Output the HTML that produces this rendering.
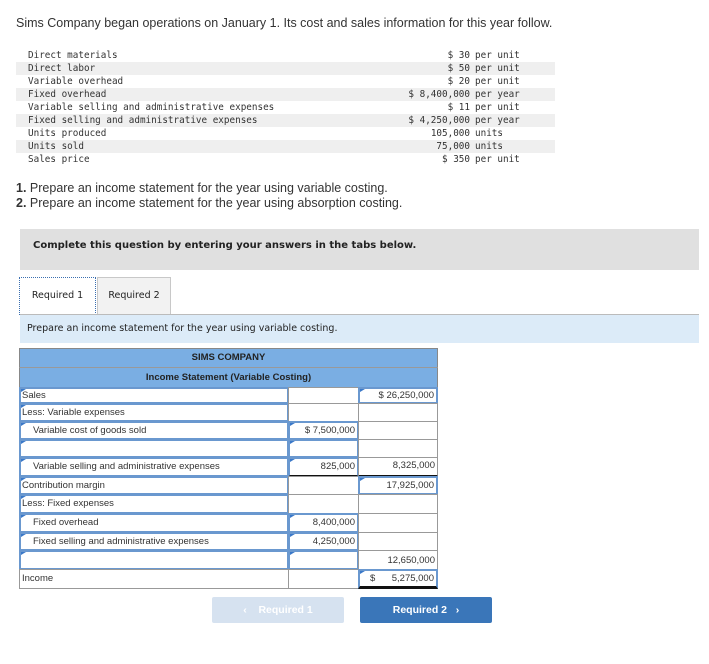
<!DOCTYPE html>
<html><head><style>
*{margin:0;padding:0;box-sizing:border-box}
body{width:709px;height:664px;background:#fff;position:relative;font-family:"Liberation Sans",Arial,sans-serif;color:#222;overflow:hidden}
.a{position:absolute}
.mono{font-family:"DejaVu Sans Mono","Liberation Mono",monospace;font-size:9.3px;color:#333}
.dr{position:absolute;left:16px;width:539px;height:13px;line-height:13px}
.dr.s{background:#efefef}
.dr .l{position:absolute;left:12px}
.dr .v{position:absolute;right:85px;text-align:right}
.dr .u{position:absolute;left:459px}
.c{position:absolute;border:1px solid #999;font-size:9.5px;color:#333;line-height:15px;white-space:nowrap;overflow:hidden;background:#fff}
.i{border:2px solid #6a98cf}
.i:before{content:"";position:absolute;left:0;top:0;border-top:3px solid #3a78c8;border-right:5px solid transparent}
.r{text-align:right;padding-right:2px}
.ind{padding-left:12px}
</style></head><body>
<div class="a" style="left:16px;top:16px;font-size:12.5px;color:#333">Sims Company began operations on January 1. Its cost and sales information for this year follow.</div>

<div class="mono">
<div class="dr" style="top:49px"><span class="l">Direct materials</span><span class="v">$ 30</span><span class="u">per unit</span></div>
<div class="dr s" style="top:62px"><span class="l">Direct labor</span><span class="v">$ 50</span><span class="u">per unit</span></div>
<div class="dr" style="top:75px"><span class="l">Variable overhead</span><span class="v">$ 20</span><span class="u">per unit</span></div>
<div class="dr s" style="top:88px"><span class="l">Fixed overhead</span><span class="v">$ 8,400,000</span><span class="u">per year</span></div>
<div class="dr" style="top:101px"><span class="l">Variable selling and administrative expenses</span><span class="v">$ 11</span><span class="u">per unit</span></div>
<div class="dr s" style="top:114px"><span class="l">Fixed selling and administrative expenses</span><span class="v">$ 4,250,000</span><span class="u">per year</span></div>
<div class="dr" style="top:127px"><span class="l">Units produced</span><span class="v">105,000</span><span class="u">units</span></div>
<div class="dr s" style="top:140px"><span class="l">Units sold</span><span class="v">75,000</span><span class="u">units</span></div>
<div class="dr" style="top:153px"><span class="l">Sales price</span><span class="v">$ 350</span><span class="u">per unit</span></div>
</div>

<div class="a" style="left:16px;top:181px;font-size:12.5px;color:#333;line-height:15px"><b>1.</b> Prepare an income statement for the year using variable costing.<br><b>2.</b> Prepare an income statement for the year using absorption costing.</div>

<div class="a" style="left:20px;top:229px;width:679px;height:41px;background:#e0e0e0"></div>
<div class="a" style="left:33px;top:240px;font-size:10px;font-weight:bold;color:#222;font-family:'DejaVu Sans',sans-serif">Complete this question by entering your answers in the tabs below.</div>

<div class="a" style="left:19px;top:277px;width:77px;height:38px;border:1px dotted #3a6fb0;border-bottom:none;background:#fff;font-size:9.5px;text-align:center;line-height:36px;font-family:'DejaVu Sans',sans-serif">Required 1</div>
<div class="a" style="left:97px;top:277px;width:74px;height:37px;border:1px solid #c8c8c8;border-bottom:none;background:#f2f2f2;font-size:9.5px;text-align:center;line-height:36px;font-family:'DejaVu Sans',sans-serif">Required 2</div>
<div class="a" style="left:20px;top:314px;width:679px;height:29px;background:#dcebf8;border-top:1px solid #bbb"></div>
<div class="a" style="left:27px;top:323px;font-size:9.5px;font-family:'DejaVu Sans',sans-serif;color:#222">Prepare an income statement for the year using variable costing.</div>

<div class="a" style="left:19px;top:348px;width:419px;height:40px;background:#7aaee3;border:1px solid #888"></div>
<div class="a" style="left:19px;top:367px;width:419px;height:1px;background:#999"></div>
<div class="a" style="left:19px;top:352px;width:419px;text-align:center;font-size:9.5px;font-weight:bold;color:#222">SIMS COMPANY</div>
<div class="a" style="left:19px;top:372px;width:419px;text-align:center;font-size:9.5px;font-weight:bold;color:#222">Income Statement (Variable Costing)</div>

<div class="c i" style="left:19px;top:387px;width:270px;height:17px;padding-left:1px;line-height:13px">Sales</div>
<div class="c" style="left:288px;top:387px;width:71px;height:17px"></div>
<div class="c i r" style="left:358px;top:387px;width:80px;height:17px;line-height:13px">$ 26,250,000</div>

<div class="c i" style="left:19px;top:403px;width:270px;height:19px;padding-left:1px">Less: Variable expenses</div>
<div class="c" style="left:288px;top:403px;width:71px;height:19px"></div>
<div class="c" style="left:358px;top:403px;width:80px;height:19px"></div>

<div class="c i ind" style="left:19px;top:421px;width:270px;height:19px">Variable cost of goods sold</div>
<div class="c i r" style="left:288px;top:421px;width:71px;height:19px">$ 7,500,000</div>
<div class="c" style="left:358px;top:421px;width:80px;height:19px"></div>

<div class="c i" style="left:19px;top:439px;width:270px;height:19px"></div>
<div class="c i" style="left:288px;top:439px;width:71px;height:19px"></div>
<div class="c" style="left:358px;top:439px;width:80px;height:19px"></div>

<div class="c i ind" style="left:19px;top:457px;width:270px;height:20px">Variable selling and administrative expenses</div>
<div class="c i r" style="left:288px;top:457px;width:71px;height:20px;border-bottom:2px solid #111">825,000</div>
<div class="c r" style="left:358px;top:457px;width:80px;height:20px;border-bottom:2px solid #111">8,325,000</div>

<div class="c i" style="left:19px;top:476px;width:270px;height:19px;padding-left:1px">Contribution margin</div>
<div class="c" style="left:288px;top:476px;width:71px;height:19px"></div>
<div class="c i r" style="left:358px;top:476px;width:80px;height:19px">17,925,000</div>

<div class="c i" style="left:19px;top:494px;width:270px;height:20px;padding-left:1px">Less: Fixed expenses</div>
<div class="c" style="left:288px;top:494px;width:71px;height:20px"></div>
<div class="c" style="left:358px;top:494px;width:80px;height:20px"></div>

<div class="c i ind" style="left:19px;top:513px;width:270px;height:20px">Fixed overhead</div>
<div class="c i r" style="left:288px;top:513px;width:71px;height:20px">8,400,000</div>
<div class="c" style="left:358px;top:513px;width:80px;height:20px"></div>

<div class="c i ind" style="left:19px;top:532px;width:270px;height:19px">Fixed selling and administrative expenses</div>
<div class="c i r" style="left:288px;top:532px;width:71px;height:19px">4,250,000</div>
<div class="c" style="left:358px;top:532px;width:80px;height:19px"></div>

<div class="c i" style="left:19px;top:550px;width:270px;height:20px"></div>
<div class="c i" style="left:288px;top:550px;width:71px;height:20px"></div>
<div class="c r" style="left:358px;top:550px;width:80px;height:20px;line-height:20px">12,650,000</div>

<div class="c" style="left:19px;top:569px;width:270px;height:20px;padding-left:2px;line-height:18px">Income</div>
<div class="c" style="left:288px;top:569px;width:71px;height:20px"></div>
<div class="c i r" style="left:358px;top:569px;width:80px;height:20px;border-bottom:3px solid #111;line-height:15px"><span style="float:left;padding-left:10px">$</span>5,275,000</div>

<div class="a" style="left:212px;top:597px;width:132px;height:26px;background:#d6e2f0;border-radius:2px;color:#fff;font-size:10.5px;font-weight:bold;text-align:center;line-height:26px">&lsaquo;&nbsp;&nbsp;&nbsp; Required 1</div>
<div class="a" style="left:360px;top:597px;width:132px;height:26px;background:#3a76b9;border-radius:2px;color:#fff;font-size:10.5px;font-weight:bold;text-align:center;line-height:26px">Required 2 &nbsp;&nbsp;&rsaquo;</div>
</body></html>
